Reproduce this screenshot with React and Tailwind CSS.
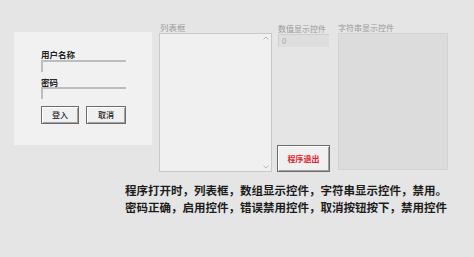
import React from 'react'

const font = { fontFamily: '"Noto Sans CJK SC", "Noto Sans", sans-serif' }

function Field() {
  return (
    <div className="w-[85px] h-[12px] border-t-2 border-l-2 border-t-[#bdbdbd] border-l-[#bdbdbd] bg-[#f1f1f1]" />
  )
}

function Btn({ children, className = '' }) {
  return (
    <button
      className={`flex items-center justify-center border border-[#6c6c6c] bg-[#f0f0f0] shadow-[inset_1px_1px_0_#ffffff,inset_-1px_-1px_0_#a0a0a0] text-[8px] leading-none ${className}`}
    >
      {children}
    </button>
  )
}

function LoginPanel() {
  return (
    <div className="mt-[10px] w-[138px] h-[113px] bg-[#f1f1f1] pl-[27px] pt-[17px] flex flex-col">
      <div className="h-[10px] leading-[10px] text-[8.5px] font-bold text-[#222]">用户名称</div>
      <div className="mt-[1px]"><Field /></div>
      <div className="mt-[5px] h-[10px] leading-[10px] text-[8.5px] font-bold text-[#222]">密码</div>
      <Field />
      <div className="mt-[7px] flex gap-[7px]">
        <Btn className="w-[38px] h-[18px] text-[#222] font-medium">登入</Btn>
        <Btn className="w-[40px] h-[18px] text-[#222] font-medium">取消</Btn>
      </div>
    </div>
  )
}

function ListBox() {
  return (
    <div className="ml-[7px] w-[113px] flex flex-col">
      <div className="h-[11px] leading-[11px] text-[8.5px] text-[#9a9a9a] pl-[1px]">列表框</div>
      <div className="h-[139px] border border-[#c9c9c9] bg-[#f0f0f0] flex justify-end">
        <div className="w-[10px] flex flex-col items-center justify-between py-[2px] text-[#a8a8a8]">
          <svg width="6" height="4" viewBox="0 0 6 4"><path d="M0.5 3.5 L3 1 L5.5 3.5" fill="none" stroke="#a8a8a8" strokeWidth="0.8" /></svg>
          <svg width="6" height="4" viewBox="0 0 6 4"><path d="M0.5 0.5 L3 3 L5.5 0.5" fill="none" stroke="#a8a8a8" strokeWidth="0.8" /></svg>
        </div>
      </div>
    </div>
  )
}

function NumericColumn() {
  return (
    <div className="ml-[6px] w-[52px] h-[150px] flex flex-col">
      <div className="h-[12px] leading-[12px] text-[8px] text-[#9a9a9a] pt-[1px]">数值显示控件</div>
      <div className="w-[51px] h-[13px] bg-[#dedede] border-t border-l border-[#cfcfcf] pl-[3px] text-[8px] leading-[12px] text-[#a8a8a8]">0</div>
      <Btn className="mt-auto -ml-[1px] w-[53px] h-[27px] text-[#e0202a] font-bold text-[8.5px]">程序退出</Btn>
    </div>
  )
}

function StringBox() {
  return (
    <div className="ml-[8px] w-[110px] flex flex-col">
      <div className="h-[11px] leading-[11px] text-[8px] text-[#9a9a9a]">字符串显示控件</div>
      <div className="h-[137px] border border-[#d3d3d3] bg-[#dcdcdc]" />
    </div>
  )
}

export default function App() {
  return (
    <div className="w-[474px] h-[257px] bg-[#e5e5e5] overflow-hidden flex flex-col" style={font}>
      <div className="flex items-start pl-[14px] pt-[22px] h-[172px]">
        <LoginPanel />
        <ListBox />
        <NumericColumn />
        <StringBox />
      </div>
      <div className="mt-[10px] pl-[125px] text-[11.5px] leading-[17px] font-bold text-[#1c1c1c]">
        <div>程序打开时，列表框，数组显示控件，字符串显示控件，禁用。</div>
        <div>密码正确，启用控件，错误禁用控件，取消按钮按下，禁用控件</div>
      </div>
    </div>
  )
}
